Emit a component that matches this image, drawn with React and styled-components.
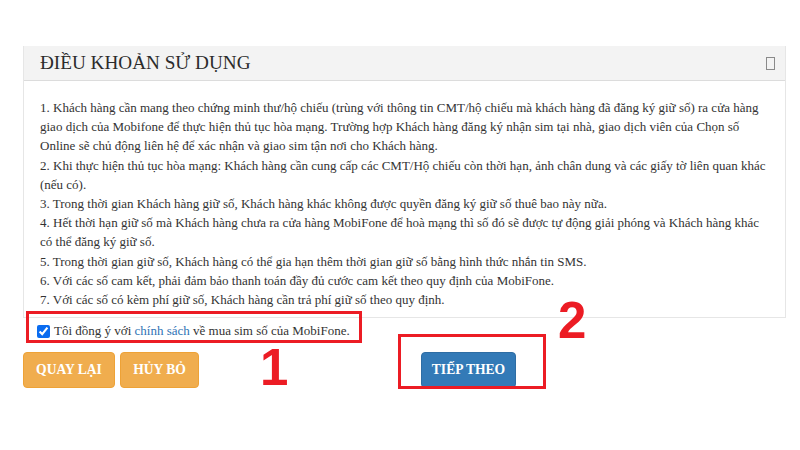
import styled, { createGlobalStyle } from 'styled-components';

const GlobalStyle = createGlobalStyle`
  html, body {
    margin: 0;
    padding: 0;
    background: #ffffff;
  }
  body {
    font-family: 'Liberation Serif', 'Times New Roman', serif;
    color: #333333;
  }
`;

const Page = styled.div`
  width: 800px;
  height: 450px;
  padding: 46px 0 0 23px;
  box-sizing: border-box;
  overflow: hidden;
`;

const Panel = styled.section`
  width: 763px;
  border: 1px solid #e6e6e6;
  border-top: none;
  box-sizing: border-box;
`;

const PanelHeader = styled.div`
  height: 35px;
  display: flex;
  align-items: center;
  justify-content: space-between;
  padding: 0 10px 0 16px;
  background: #f3f3f3;
  border-bottom: 1px solid #dcdcdc;
  box-sizing: border-box;
`;

const Title = styled.h3`
  margin: 0;
  font-size: 19.2px;
  font-weight: normal;
  color: #2b2b2b;
`;

const ToggleIcon = styled.span`
  width: 7px;
  height: 11px;
  border: 1px solid #8a8a8a;
  display: block;
`;

const PanelBody = styled.div`
  padding: 17px 15px 8px 16px;
  font-size: 13px;
  line-height: 19.2px;
  color: #333333;
`;

const Term = styled.p`
  margin: 0;
`;

const AgreeRow = styled.label`
  position: relative;
  height: 26px;
  display: flex;
  align-items: center;
  padding-left: 14px;
  font-size: 13px;
  color: #333333;
  white-space: pre;
`;

const Check = styled.input`
  width: 13px;
  height: 13px;
  margin: 0 4px 0 0;
  accent-color: #0a6cf0;
`;

const Link = styled.a`
  color: #2f73b5;
  text-decoration: none;
`;

const ButtonRow = styled.div`
  position: relative;
  display: flex;
  gap: 5px;
  margin-top: 8px;
`;

const Button = styled.button`
  height: 36px;
  width: ${({ $w }) => $w}px;
  margin-left: ${({ $offset }) => $offset || 0}px;
  padding: 0;
  border-radius: 4px;
  border: 1px solid ${({ $variant }) => ($variant === 'primary' ? '#2e6da4' : '#eea236')};
  background: ${({ $variant }) => ($variant === 'primary' ? '#337ab7' : '#f0ad4e')};
  color: #ffffff;
  font-family: 'Liberation Serif', 'Times New Roman', serif;
  font-size: 13.6px;
  font-weight: bold;
  cursor: pointer;
`;

const MarkFrame = styled.div`
  position: absolute;
  left: ${({ $x }) => $x}px;
  top: ${({ $y }) => $y}px;
  width: ${({ $w }) => $w}px;
  height: ${({ $h }) => $h}px;
  border: 3px solid #ec1c24;
  box-sizing: border-box;
  pointer-events: none;
`;

const MarkNumber = styled.span`
  position: absolute;
  left: ${({ $x }) => $x}px;
  top: ${({ $y }) => $y}px;
  font-family: 'Liberation Sans', Arial, sans-serif;
  font-weight: bold;
  font-size: 51px;
  line-height: 51px;
  color: #ec1c24;
`;

const terms = [
  '1. Khách hàng cần mang theo chứng minh thư/hộ chiếu (trùng với thông tin CMT/hộ chiếu mà khách hàng đã đăng ký giữ số) ra cửa hàng giao dịch của Mobifone để thực hiện thủ tục hòa mạng. Trường hợp Khách hàng đăng ký nhận sim tại nhà, giao dịch viên của Chọn số Online sẽ chủ động liên hệ để xác nhận và giao sim tận nơi cho Khách hàng.',
  '2. Khi thực hiện thủ tục hòa mạng: Khách hàng cần cung cấp các CMT/Hộ chiếu còn thời hạn, ảnh chân dung và các giấy tờ liên quan khác (nếu có).',
  '3. Trong thời gian Khách hàng giữ số, Khách hàng khác không được quyền đăng ký giữ số thuê bao này nữa.',
  '4. Hết thời hạn giữ số mà Khách hàng chưa ra cửa hàng MobiFone để hoà mạng thì số đó sẽ được tự động giải phóng và Khách hàng khác có thể đăng ký giữ số.',
  '5. Trong thời gian giữ số, Khách hàng có thể gia hạn thêm thời gian giữ số bằng hình thức nhắn tin SMS.',
  '6. Với các số cam kết, phải đảm bảo thanh toán đầy đủ cước cam kết theo quy định của MobiFone.',
  '7. Với các số có kèm phí giữ số, Khách hàng cần trả phí giữ số theo quy định.',
];

export default function App() {
  return (
    <>
      <GlobalStyle />
      <Page>
        <Panel>
          <PanelHeader>
            <Title>ĐIỀU KHOẢN SỬ DỤNG</Title>
            <ToggleIcon />
          </PanelHeader>
          <PanelBody>
            {terms.map((t) => (
              <Term key={t}>{t}</Term>
            ))}
          </PanelBody>
        </Panel>
        <AgreeRow>
          <Check type="checkbox" defaultChecked />
          {'Tôi đồng ý với '}
          <Link href="#">chính sách</Link>
          {' về mua sim số của MobiFone.'}
          <MarkFrame $x={3} $y={-7} $w={336} $h={32} />
        </AgreeRow>
        <ButtonRow>
          <Button $w={92}>QUAY LẠI</Button>
          <Button $w={79}>HỦY BỎ</Button>
          <Button $variant="primary" $w={95} $offset={217}>
            TIẾP THEO
          </Button>
          <MarkNumber $x={237} $y={-10}>1</MarkNumber>
          <MarkNumber $x={535} $y={-57}>2</MarkNumber>
          <MarkFrame $x={375} $y={-18} $w={148} $h={55} />
        </ButtonRow>
      </Page>
    </>
  );
}
